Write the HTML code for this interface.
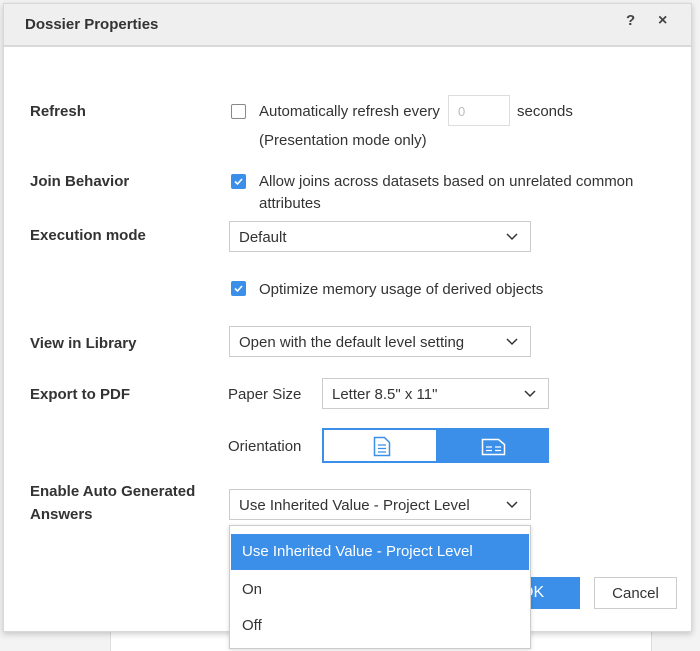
<!DOCTYPE html>
<html><head><style>
body{margin:0;width:700px;height:651px;background:#f3f3f3;font-family:"Liberation Sans",sans-serif;color:#333;position:relative;overflow:hidden}
.dlg{position:absolute;left:3px;top:3px;width:687px;height:627px;background:#fff;border:1px solid #d8d8d8;box-shadow:0 2px 6px rgba(0,0,0,.2)}
.hdr{height:41px;background:#efefef;border-bottom:2px solid #d9d9d9;position:relative}
.hdr b{position:absolute;left:21px;top:12px;font-size:15px;color:#333}
.a{position:absolute;font-size:15px}
.lbl{position:absolute;font-size:15px;font-weight:bold;color:#333}
.cb{position:absolute;width:13px;height:13px;border:1px solid #888;border-radius:2px;background:#fff}
.cb.on{background:#3b8fe8;border-color:#3b8fe8}
.sel{position:absolute;border:1px solid #ccc;background:#fff;height:31px;box-sizing:border-box;font-size:15px;padding:7px 0 0 9px}
.sel svg{position:absolute;right:12px;top:11px}
.btn{position:absolute;height:32px;box-sizing:border-box;font-size:15px;text-align:center;padding-top:7px}
</style></head><body>
<div style="position:absolute;left:110px;top:630px;width:540px;height:21px;border-left:1px solid #ddd;border-right:1px solid #ddd;background:#fff"></div>
<div class="dlg">
<div class="hdr"><b>Dossier Properties</b><span style="position:absolute;left:622px;top:8px;font-size:15px;font-weight:bold;color:#444">?</span><span style="position:absolute;left:654px;top:8px;font-size:16px;font-weight:bold;color:#444">×</span></div>
</div>
<div class="lbl" style="left:30px;top:103px">Refresh</div>
<div class="cb" style="left:231px;top:104px"></div>
<div class="a" style="left:259px;top:103px">Automatically refresh every</div>
<div style="position:absolute;left:448px;top:95px;width:62px;height:31px;box-sizing:border-box;border:1px solid #ddd;font-size:13px;color:#bbb;padding:8px 0 0 9px">0</div>
<div class="a" style="left:517px;top:103px">seconds</div>
<div class="a" style="left:259px;top:132px">(Presentation mode only)</div>
<div class="lbl" style="left:30px;top:173px">Join Behavior</div>
<div class="cb on" style="left:231px;top:174px"><svg width="13" height="13"><path d="M3 6.5l2.5 2.5 4.5-5" stroke="#fff" stroke-width="1.6" fill="none"/></svg></div>
<div class="a" style="left:259px;top:173px">Allow joins across datasets based on unrelated common</div>
<div class="a" style="left:259px;top:195px">attributes</div>
<div class="lbl" style="left:30px;top:227px">Execution mode</div>
<div class="sel" style="left:229px;top:221px;width:302px">Default<svg width="12" height="8"><path d="M1 1l5 5 5-5" stroke="#333" stroke-width="1.5" fill="none"/></svg></div>
<div class="cb on" style="left:231px;top:281px"><svg width="13" height="13"><path d="M3 6.5l2.5 2.5 4.5-5" stroke="#fff" stroke-width="1.6" fill="none"/></svg></div>
<div class="a" style="left:259px;top:281px">Optimize memory usage of derived objects</div>
<div class="lbl" style="left:30px;top:335px">View in Library</div>
<div class="sel" style="left:229px;top:326px;width:302px">Open with the default level setting<svg width="12" height="8"><path d="M1 1l5 5 5-5" stroke="#333" stroke-width="1.5" fill="none"/></svg></div>
<div class="lbl" style="left:30px;top:386px">Export to PDF</div>
<div class="a" style="left:228px;top:386px">Paper Size</div>
<div class="sel" style="left:322px;top:378px;width:227px">Letter 8.5" x 11"<svg width="12" height="8"><path d="M1 1l5 5 5-5" stroke="#333" stroke-width="1.5" fill="none"/></svg></div>
<div class="a" style="left:228px;top:438px">Orientation</div>
<div style="position:absolute;left:322px;top:428px;width:227px;height:35px;box-sizing:border-box;border:2px solid #3b8fe8;background:#fff">
<div style="position:absolute;left:112px;top:0;width:111px;height:31px;background:#3b8fe8"></div>
<svg style="position:absolute;left:49px;top:6px" width="18" height="21"><path d="M1.5 1.5h10l5 5v13h-15z" stroke="#3b8fe8" stroke-width="1.5" fill="none"/><path d="M5 9h8M5 12.5h8M5 16h8" stroke="#3b8fe8" stroke-width="1.3"/></svg>
<svg style="position:absolute;left:157px;top:8px" width="25" height="18"><path d="M1.5 1.5h16l6 5v10h-22z" stroke="#fff" stroke-width="1.5" fill="none"/><path d="M5 9h6M14 9h6M5 12.5h6M14 12.5h6" stroke="#fff" stroke-width="1.3"/></svg>
</div>
<div class="lbl" style="left:30px;top:483px">Enable Auto Generated</div>
<div class="lbl" style="left:30px;top:506px">Answers</div>
<div class="sel" style="left:229px;top:489px;width:302px">Use Inherited Value - Project Level<svg width="12" height="8"><path d="M1 1l5 5 5-5" stroke="#333" stroke-width="1.5" fill="none"/></svg></div>
<div class="btn" style="left:490px;top:577px;width:90px;background:#3b8fe8;color:#fff"><span style="position:absolute;left:31px;top:7px;font-size:16px">OK</span></div>
<div class="btn" style="left:594px;top:577px;width:83px;border:1px solid #ccc;background:#fff">Cancel</div>
<div style="position:absolute;left:229px;top:525px;width:302px;height:124px;box-sizing:border-box;border:1px solid #ccc;background:#fff;box-shadow:0 1px 4px rgba(0,0,0,.15)">
<div style="position:absolute;left:1px;top:8px;width:298px;height:36px;background:#3b8fe8;color:#fff;font-size:15px;box-sizing:border-box;padding:9px 0 0 11px">Use Inherited Value - Project Level</div>
<div class="a" style="left:12px;top:55px">On</div>
<div class="a" style="left:12px;top:91px">Off</div>
</div>
</body></html>
